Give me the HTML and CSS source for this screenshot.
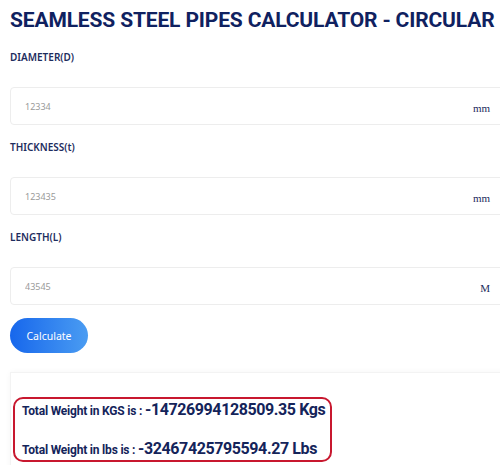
FILE: index.html
```html
<!DOCTYPE html>
<html lang="en">
<head>
  <meta charset="UTF-8">
  <meta name="viewport" content="width=device-width, initial-scale=1.0">
  <title>Seamless Steel Pipes Calculator - Circular</title>
  <link rel="stylesheet" href="styles.css">
</head>
<body>
  <div class="calc">
    <h1 class="title">SEAMLESS STEEL PIPES CALCULATOR - CIRCULAR</h1>

    <div class="field">
      <label class="field-label" for="diameter">DIAMETER(D)</label>
      <div class="input-group">
        <input class="field-input" id="diameter" type="text" placeholder="12334">
        <span class="unit">mm</span>
      </div>
    </div>

    <div class="field">
      <label class="field-label" for="thickness">THICKNESS(t)</label>
      <div class="input-group">
        <input class="field-input" id="thickness" type="text" placeholder="123435">
        <span class="unit">mm</span>
      </div>
    </div>

    <div class="field">
      <label class="field-label" for="length">LENGTH(L)</label>
      <div class="input-group">
        <input class="field-input" id="length" type="text" placeholder="43545">
        <span class="unit">M</span>
      </div>
    </div>

    <button class="calc-button" type="button">Calculate</button>

    <div class="result">
      <div class="result-box">
        <p class="result-line">Total Weight in KGS is : <span class="result-value">-14726994128509.35 Kgs</span></p>
        <p class="result-line">Total Weight in lbs is : <span class="result-value">-32467425795594.27 Lbs</span></p>
      </div>
    </div>
  </div>
</body>
</html>
```

FILE: styles.css
```css
html,
body {
  overflow: hidden;
}

body {
  margin: 0;
  background: #ffffff;
  font-family: 'Noto Sans', sans-serif;
  color: #14245a;
}

.calc {
  padding: 0 0 0 10px;
}

/* Heading */
.title {
  margin: 5px 0 15px;
  font-family: Roboto, 'Liberation Sans', sans-serif;
  font-size: 21px;
  line-height: 30px;
  font-weight: bold;
  letter-spacing: -0.15px;
  color: #0f2160;
  white-space: nowrap;
}

/* Form fields */
.field-label {
  display: block;
  margin-bottom: 23px;
  font-size: 10px;
  line-height: 14px;
  font-weight: 600;
  color: #1e2d5e;
}

.input-group {
  display: flex;
  align-items: center;
  height: 38px;
  margin: 0 -20px 15px 0;
  border: 1px solid #ededed;
  border-radius: 4px;
  box-sizing: border-box;
  background: #ffffff;
}

.field-input {
  flex: 1;
  min-width: 0;
  height: 100%;
  padding: 0 0 0 14px;
  border: none;
  outline: none;
  background: transparent;
  font-family: 'Noto Sans', sans-serif;
  font-size: 9px;
  color: #333;
}

.field-input::placeholder {
  color: #9a9a9a;
}

.unit {
  width: 40px;
  padding: 4px 29px 0 0;
  text-align: right;
  font-family: 'Liberation Serif', serif;
  font-size: 11px;
  color: #1b2a5c;
}

/* Button */
.calc-button {
  display: block;
  width: 78px;
  height: 35px;
  margin-top: -2px;
  border: none;
  border-radius: 18px;
  background: linear-gradient(90deg, #1767ec, #4a9cf2);
  font-family: 'Noto Sans', sans-serif;
  font-size: 10.5px;
  color: #ffffff;
  cursor: pointer;
}

/* Result */
.result {
  margin: 19px -20px 0 0;
  padding: 24px 0 20px 2px;
  border: 1px solid #f3f3f3;
  box-shadow: 0 0 6px rgba(0, 0, 0, 0.04);
}

.result-box {
  display: inline-block;
  padding: 1px 5px 0 7px;
  border: 2.5px solid #c8182f;
  border-radius: 10px;
}

.result-line {
  margin: 0;
  font-family: Roboto, 'Liberation Sans', sans-serif;
  font-size: 12px;
  line-height: 20px;
  font-weight: bold;
  letter-spacing: -0.2px;
  color: #14245a;
}

.result-line + .result-line {
  margin-top: 17.5px;
}

.result-value {
  font-size: 16px;
  letter-spacing: -0.4px;
}
```
